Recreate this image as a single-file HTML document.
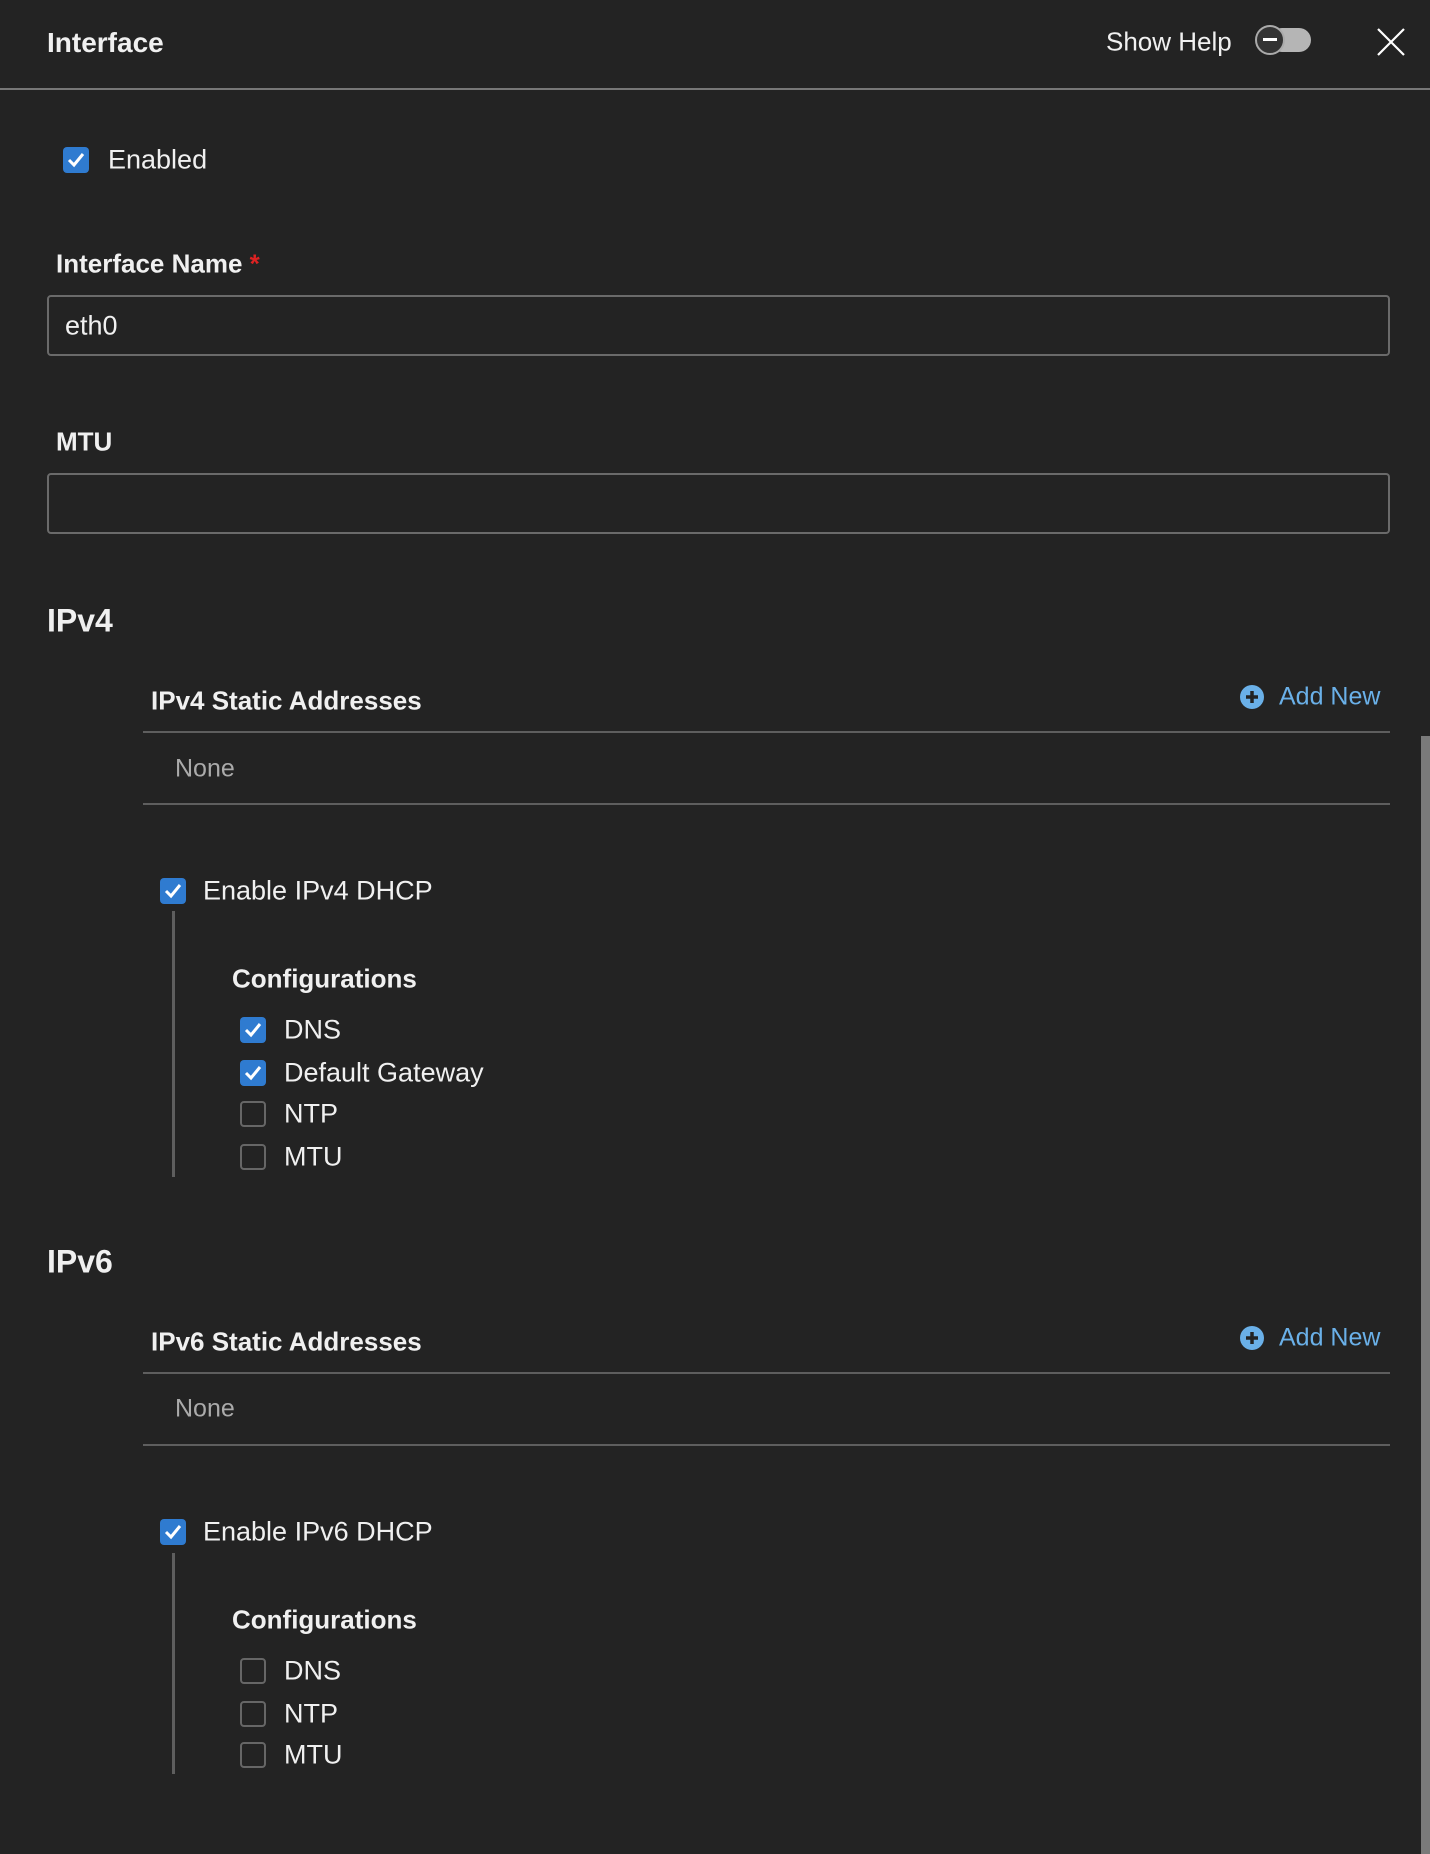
<!DOCTYPE html>
<html><head><meta charset="utf-8"><style>
body{margin:0;width:1430px;height:1854px;background:#232323;font-family:"Liberation Sans",sans-serif;color:#f0f0f0;position:relative;overflow:hidden}
.a{position:absolute;white-space:nowrap}
.t{transform:translateY(-50%)}
.cb{position:absolute;width:26px;height:26px;border-radius:4px;background:#2f7bd0;transform:translateY(-50%)}
.cb svg{position:absolute;left:3px;top:3px}
.ub{position:absolute;width:26px;height:26px;border-radius:4px;border:2px solid #666;box-sizing:border-box;transform:translateY(-50%)}
.line{position:absolute;height:2px;background:#5e5e5e}
.inp{position:absolute;left:47px;width:1343px;height:61px;border:2px solid #6a6a6a;border-radius:4px;box-sizing:border-box}
.b{font-weight:bold}
</style></head><body>
<div class="a t b" style="left:47px;top:43px;font-size:28px">Interface</div>
<div class="a t" style="left:1106px;top:42px;font-size:26px">Show Help</div>
<div class="a" style="left:1270px;top:28px;width:41px;height:24px;border-radius:12px;background:#b5b5b5"></div>
<div class="a" style="left:1255px;top:25px;width:26px;height:26px;border-radius:50%;background:#333;border:2px solid #aaa"></div>
<div class="a" style="left:1263px;top:38px;width:14px;height:3px;background:#fff"></div>
<svg class="a" style="left:1376px;top:27px" width="30" height="30"><path d="M2 2L28 28M28 2L2 28" stroke="#fff" stroke-width="2.2"/></svg>
<div class="line" style="left:0;top:88px;width:1430px;background:#777"></div>

<div class="cb" style="left:63px;top:160px"><svg width="20" height="20"><path d="M3 10l5 5 9-11" stroke="#fff" stroke-width="3" fill="none"/></svg></div>
<div class="a t" style="left:108px;top:160px;font-size:27px">Enabled</div>

<div class="a t b" style="left:56px;top:264px;font-size:26px">Interface Name <span style="color:#d22">*</span></div>
<div class="inp" style="top:295px"></div>
<div class="a t" style="left:65px;top:326px;font-size:27px">eth0</div>
<div class="a t b" style="left:56px;top:442px;font-size:26px">MTU</div>
<div class="inp" style="top:473px"></div>

<div class="a t b" style="left:47px;top:621px;font-size:32px">IPv4</div>
<div class="a t b" style="left:151px;top:701px;font-size:26px">IPv4 Static Addresses</div>
<svg class="a" style="left:1240px;top:685px" width="24" height="24"><circle cx="12" cy="12" r="12" fill="#6ab0e8"/><path d="M12 6v12M6 12h12" stroke="#232323" stroke-width="3.5"/></svg>
<div class="a t" style="left:1279px;top:697px;font-size:25px;color:#6ab0e8">Add New</div>
<div class="line" style="left:143px;top:731px;width:1247px"></div>
<div class="a t" style="left:175px;top:769px;font-size:25px;color:#aaa">None</div>
<div class="line" style="left:143px;top:803px;width:1247px"></div>
<div class="cb" style="left:160px;top:891px"><svg width="20" height="20"><path d="M3 10l5 5 9-11" stroke="#fff" stroke-width="3" fill="none"/></svg></div>
<div class="a t" style="left:203px;top:891px;font-size:27px">Enable IPv4 DHCP</div>
<div class="a" style="left:172px;top:911px;width:3px;height:266px;background:#5e5e5e"></div>
<div class="a t b" style="left:232px;top:979px;font-size:26px">Configurations</div>
<div class="cb" style="left:240px;top:1030px"><svg width="20" height="20"><path d="M3 10l5 5 9-11" stroke="#fff" stroke-width="3" fill="none"/></svg></div>
<div class="a t" style="left:284px;top:1030px;font-size:27px">DNS</div>
<div class="cb" style="left:240px;top:1073px"><svg width="20" height="20"><path d="M3 10l5 5 9-11" stroke="#fff" stroke-width="3" fill="none"/></svg></div>
<div class="a t" style="left:284px;top:1073px;font-size:27px">Default Gateway</div>
<div class="ub" style="left:240px;top:1114px"></div>
<div class="a t" style="left:284px;top:1114px;font-size:27px">NTP</div>
<div class="ub" style="left:240px;top:1157px"></div>
<div class="a t" style="left:284px;top:1157px;font-size:27px">MTU</div>

<div class="a t b" style="left:47px;top:1262px;font-size:32px">IPv6</div>
<div class="a t b" style="left:151px;top:1342px;font-size:26px">IPv6 Static Addresses</div>
<svg class="a" style="left:1240px;top:1326px" width="24" height="24"><circle cx="12" cy="12" r="12" fill="#6ab0e8"/><path d="M12 6v12M6 12h12" stroke="#232323" stroke-width="3.5"/></svg>
<div class="a t" style="left:1279px;top:1338px;font-size:25px;color:#6ab0e8">Add New</div>
<div class="line" style="left:143px;top:1372px;width:1247px"></div>
<div class="a t" style="left:175px;top:1409px;font-size:25px;color:#aaa">None</div>
<div class="line" style="left:143px;top:1444px;width:1247px"></div>
<div class="cb" style="left:160px;top:1532px"><svg width="20" height="20"><path d="M3 10l5 5 9-11" stroke="#fff" stroke-width="3" fill="none"/></svg></div>
<div class="a t" style="left:203px;top:1532px;font-size:27px">Enable IPv6 DHCP</div>
<div class="a" style="left:172px;top:1553px;width:3px;height:221px;background:#5e5e5e"></div>
<div class="a t b" style="left:232px;top:1620px;font-size:26px">Configurations</div>
<div class="ub" style="left:240px;top:1671px"></div>
<div class="a t" style="left:284px;top:1671px;font-size:27px">DNS</div>
<div class="ub" style="left:240px;top:1714px"></div>
<div class="a t" style="left:284px;top:1714px;font-size:27px">NTP</div>
<div class="ub" style="left:240px;top:1755px"></div>
<div class="a t" style="left:284px;top:1755px;font-size:27px">MTU</div>

<div class="a" style="left:1421px;top:736px;width:9px;height:1118px;background:#7a7a7a"></div>
</body></html>
